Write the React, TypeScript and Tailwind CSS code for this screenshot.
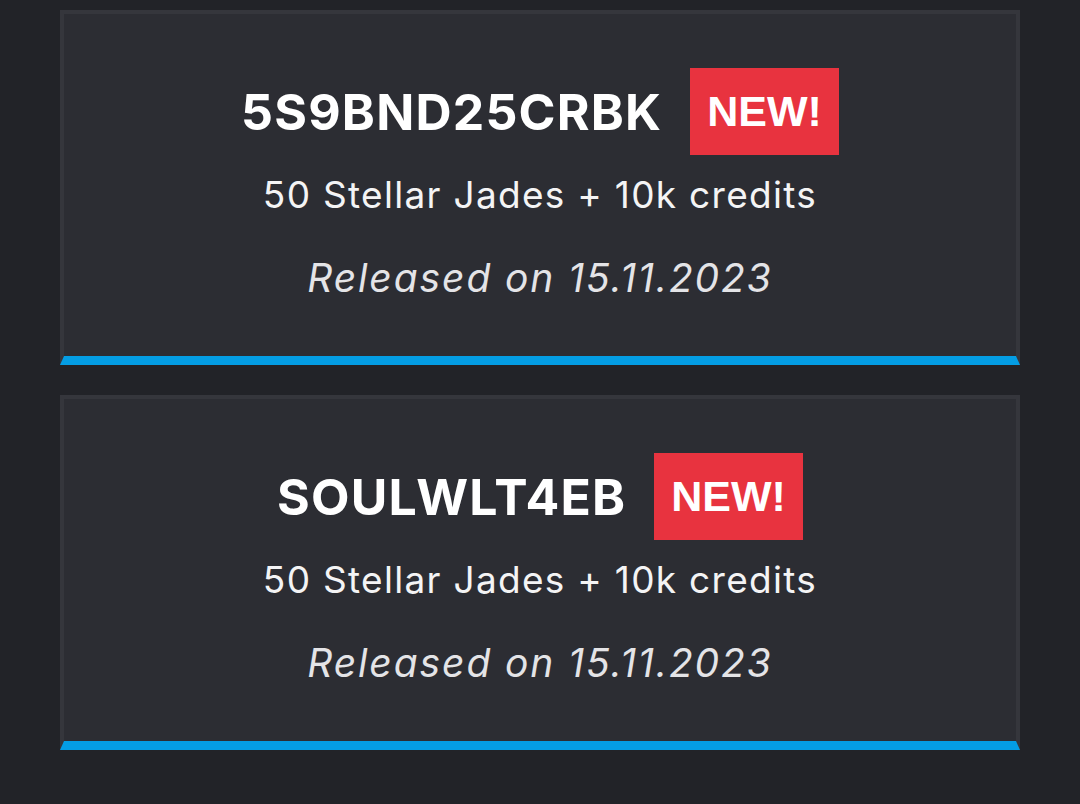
import React from 'react';

const codes = [
  { code: '5S9BND25CRBK', reward: '50 Stellar Jades + 10k credits', date: '15.11.2023' },
  { code: 'SOULWLT4EB', reward: '50 Stellar Jades + 10k credits', date: '15.11.2023' },
];

function CodeCard({ code, reward, date }: { code: string; reward: string; date: string }) {
  return (
    <div className="h-[355px] bg-[#2c2d33] border-[#35363c] border-t-4 border-x-4 border-b-[9px] border-b-[#049de4] flex flex-col items-center pt-[54px]">
      <div className="flex items-center gap-[28px]">
        <span className="text-[50px] font-bold text-white leading-none tracking-[1.2px]">{code}</span>
        <span className="h-[87px] px-[17px] flex items-center bg-[#e8333f] text-white text-[43px] font-bold leading-none font-['Liberation_Sans',sans-serif]">
          NEW!
        </span>
      </div>
      <p className="mt-[14px] text-[37px] leading-[1.4] tracking-[1.3px] text-[#f4f4f5]">{reward}</p>
      <p className="mt-[30px] text-[39px] leading-[1.4] tracking-[1.9px] italic text-[#e4e4e7]">Released on {date}</p>
    </div>
  );
}

export default function App() {
  return (
    <div className="min-h-[804px] bg-[#222328] px-[60px] pt-[10px] flex flex-col gap-[30px] font-['Inter',sans-serif]">
      {codes.map((c) => (
        <CodeCard key={c.code} {...c} />
      ))}
    </div>
  );
}
